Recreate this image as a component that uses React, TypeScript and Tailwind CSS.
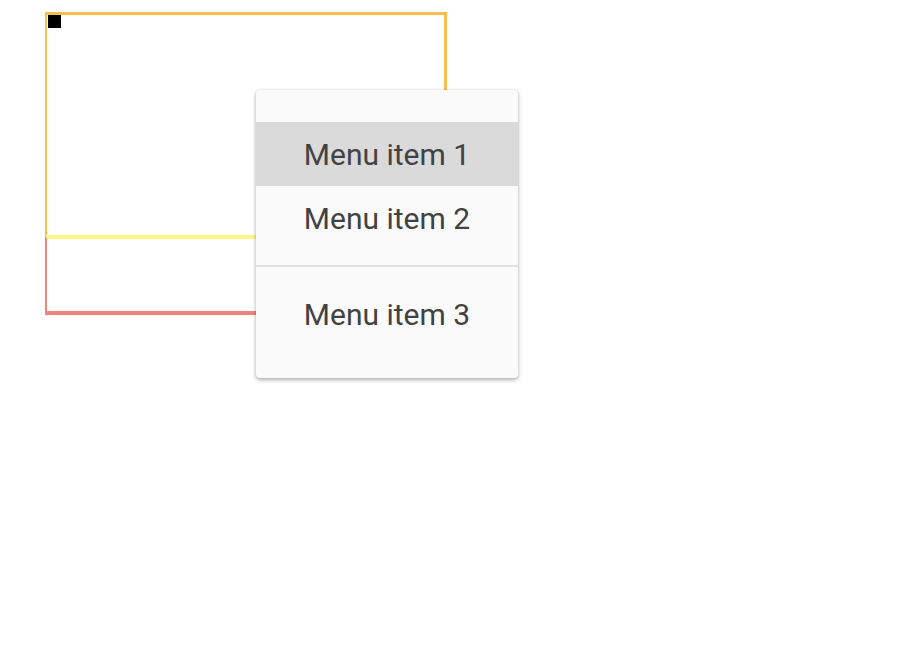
import React from 'react';

const items = ['Menu item 1', 'Menu item 2'];

export default function App() {
    return (
        <div className="relative min-h-[667px] w-full bg-white" style={{ fontFamily: 'Roboto, "Noto Sans", sans-serif' }}>
            {/* stacked boxes */}
            <div className="ml-[45px] w-[402px] pt-[12px]">
                <div className="h-[223px] border-l-2 border-r-[3px] border-t-[3px] border-[#f6bd4f]">
                    <div className="ml-[1px] mt-[0px] h-[13px] w-[13px] bg-black" />
                </div>
                <div className="h-[80px] border-x-2 border-t-4 border-b-4 border-[#ef837d] border-t-[#fdf785]" />
            </div>

            {/* open menu */}
            <div className="absolute left-[256px] top-[90px] w-[262px] rounded-[4px] bg-[#fafafa] py-8 shadow-[0_2px_4px_rgba(0,0,0,0.3),0_0_2px_rgba(0,0,0,0.12)]">
                {items.map((item, i) => (
                    <div
                        key={item}
                        className={`flex h-16 items-center justify-center text-[30px] text-[#424242] ${i === 0 ? 'bg-[#dadada]' : ''}`}
                    >
                        {item}
                    </div>
                ))}
                <div className="my-[15px] h-[2px] bg-[#e0e0e0]" />
                <div className="flex h-16 items-center justify-center text-[30px] text-[#424242]">
                    Menu item 3
                </div>
            </div>
        </div>
    );
}
